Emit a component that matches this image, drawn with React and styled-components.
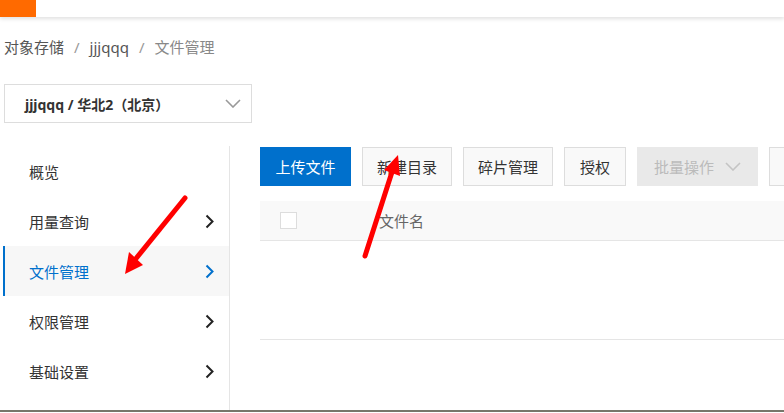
import React from "react";
import styled, { createGlobalStyle } from "styled-components";

const Global = createGlobalStyle`
  html, body {
    margin: 0;
    padding: 0;
    background: #fff;
    font-family: "Noto Sans", "Noto Sans CJK SC", sans-serif;
    font-size: 15px;
    color: #333;
  }
`;

const Shell = styled.div`
  position: relative;
  height: 410px;
  border-bottom: 2px solid #77766a;
  overflow: hidden;
`;

const TopBar = styled.div`
  height: 17px;
  background: #fff;
  box-shadow: 0 2px 4px rgba(0, 0, 0, 0.12);
  display: flex;
`;

const Logo = styled.div`
  width: 36px;
  background: #ff6a00;
`;

const Page = styled.div`
  padding-left: 3px;
`;

const Crumbs = styled.div`
  display: flex;
  align-items: center;
  gap: 10px;
  height: 20px;
  margin-top: 20px;
  padding-left: 1px;
  color: #555;
  line-height: 20px;
`;

const Sep = styled.span`
  color: #999;
`;

const Current = styled.span`
  color: #888;
`;

const Selector = styled.div`
  box-sizing: border-box;
  margin: 27px 0 0 1px;
  width: 248px;
  height: 39px;
  border: 1px solid #ddd;
  display: flex;
  align-items: center;
  justify-content: space-between;
  padding: 0 10px 0 20px;
  font-size: 14px;
  font-weight: 700;
  color: #333;
`;

const Body = styled.div`
  display: flex;
  margin-top: 23px;
`;

const Side = styled.nav`
  width: 226px;
  flex-shrink: 0;
  border-right: 1px solid #e5e5e5;
  height: 264px;
`;

const NavItem = styled.div`
  box-sizing: border-box;
  height: 50px;
  display: flex;
  align-items: center;
  justify-content: space-between;
  padding: 0 15px 0 24px;
  border-left: 2px solid ${(p) => (p.$active ? "#0070cc" : "transparent")};
  background: ${(p) => (p.$active ? "#f7f7f7" : "transparent")};
  color: ${(p) => (p.$active ? "#0070cc" : "#333")};
`;

const Main = styled.div`
  flex: 1;
  padding: 1px 0 0 30px;
  min-width: 0;
`;

const Toolbar = styled.div`
  display: flex;
  gap: 11px;
`;

const Btn = styled.div`
  box-sizing: border-box;
  flex-shrink: 0;
  width: ${(p) => p.$width}px;
  height: 39px;
  padding: ${(p) => (p.$disabled ? "0 16px" : "0")};
  display: flex;
  align-items: center;
  white-space: nowrap;
  justify-content: ${(p) => (p.$disabled ? "space-between" : "center")};
  border: 1px solid ${(p) => (p.$primary ? "#0070cc" : p.$disabled ? "#e9e9e9" : "#ddd")};
  background: ${(p) => (p.$primary ? "#0070cc" : p.$disabled ? "#e9e9e9" : "#f9f9f9")};
  color: ${(p) => (p.$primary ? "#fff" : p.$disabled ? "#bbb" : "#333")};
`;

const Table = styled.div`
  margin-top: 15px;
`;

const Head = styled.div`
  height: 39px;
  background: #f9f9f9;
  border-bottom: 1px solid #e5e5e5;
  display: flex;
  align-items: center;
  padding-left: 20px;
  color: #666;
`;

const Check = styled.span`
  box-sizing: border-box;
  width: 17px;
  height: 17px;
  border: 1px solid #ddd;
  background: #fff;
  margin-right: 82px;
`;

const EmptyRow = styled.div`
  height: 98px;
  border-bottom: 1px solid #e5e5e5;
`;

const Overlay = styled.svg`
  position: absolute;
  left: 0;
  top: 0;
  pointer-events: none;
`;

const Chevron = ({ color = "#222" }) => (
  <svg width="9" height="15" viewBox="0 0 9 15">
    <path d="M1.5 1.5 L7.5 7.5 L1.5 13.5" fill="none" stroke={color} strokeWidth="2" />
  </svg>
);

const Down = ({ color = "#999" }) => (
  <svg width="16" height="9" viewBox="0 0 16 9">
    <path d="M1 1 L8 8 L15 1" fill="none" stroke={color} strokeWidth="1.6" />
  </svg>
);

const nav = [
  { label: "概览" },
  { label: "用量查询", arrow: true },
  { label: "文件管理", arrow: true, active: true },
  { label: "权限管理", arrow: true },
  { label: "基础设置", arrow: true },
];

export default function App() {
  return (
    <Shell>
      <Global />
      <TopBar>
        <Logo />
      </TopBar>
      <Page>
        <Crumbs>
          <span>对象存储</span>
          <Sep>/</Sep>
          <span>jjjqqq</span>
          <Sep>/</Sep>
          <Current>文件管理</Current>
        </Crumbs>
        <Selector>
          <span>jjjqqq / 华北2（北京）</span>
          <Down />
        </Selector>
        <Body>
          <Side>
            {nav.map((n) => (
              <NavItem key={n.label} $active={n.active}>
                <span>{n.label}</span>
                {n.arrow && <Chevron color={n.active ? "#0070cc" : "#222"} />}
              </NavItem>
            ))}
          </Side>
          <Main>
            <Toolbar>
              <Btn $primary $width={91}>上传文件</Btn>
              <Btn $width={90}>新建目录</Btn>
              <Btn $width={90}>碎片管理</Btn>
              <Btn $width={62}>授权</Btn>
              <Btn $disabled $width={121}>
                批量操作
                <Down color="#c4c4c4" />
              </Btn>
              <Btn $width={60} />
            </Toolbar>
            <Table>
              <Head>
                <Check />
                <span>文件名</span>
              </Head>
              <EmptyRow />
            </Table>
          </Main>
        </Body>
      </Page>
      <Overlay width="784" height="410">
        <g stroke="#ff0000" strokeWidth="5" strokeLinecap="round" fill="#ff0000">
          <line x1="185" y1="198" x2="134" y2="261" />
          <line x1="365" y1="256" x2="392" y2="172" />
        </g>
        <polygon points="125,274 143,265 129,252" fill="#ff0000" />
        <polygon points="398,155 400,176 384,170" fill="#ff0000" />
      </Overlay>
    </Shell>
  );
}
